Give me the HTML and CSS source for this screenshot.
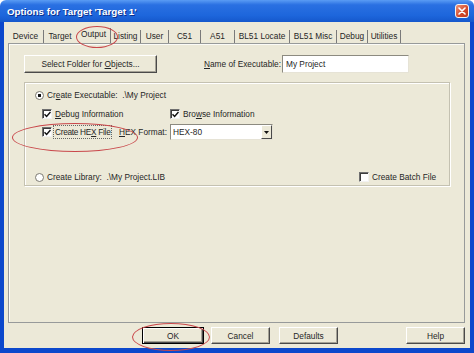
FILE: index.html
```html
<!DOCTYPE html>
<html lang="en">
<head>
  <meta charset="UTF-8">
  <title>Options for Target 'Target 1'</title>
  <link rel="stylesheet" href="styles.css">
</head>
<body>
  <div class="window">
    <div class="titlebar">
      <span class="title">Options for Target 'Target 1'</span>
      <span class="close">
        <svg width="8" height="8" viewBox="0 0 8 8"><path d="M1 1L7 7M7 1L1 7" stroke="#fff" stroke-width="1.6" stroke-linecap="round"/></svg>
      </span>
    </div>

    <div class="frame">
      <div class="tabs">
        <span class="tab t-device">Device</span>
        <span class="tab t-target">Target</span>
        <span class="tab t-output active">Output</span>
        <span class="tab t-listing">Listing</span>
        <span class="tab t-user">User</span>
        <span class="tab t-c51">C51</span>
        <span class="tab t-a51">A51</span>
        <span class="tab t-locate">BL51 Locate</span>
        <span class="tab t-misc">BL51 Misc</span>
        <span class="tab t-debug">Debug</span>
        <span class="tab t-util">Utilities</span>
      </div>

      <div class="panel">
        <div class="top-row">
          <button class="btn folder-btn">Select Folder for <u>O</u>bjects...</button>
          <span class="name-label"><u>N</u>ame of Executable:</span>
          <div class="field">My Project</div>
        </div>

        <div class="group">
          <div class="opt">
            <span class="radio on"></span><span>Cr<u>e</u>ate Executable:&nbsp; .\My Project</span>
          </div>
          <div class="opt row-b">
            <span class="item w-debug"><span class="check"><svg width="7" height="7" viewBox="0 0 7 7"><path d="M0.5 3.2L2.6 5.4L6.5 1" stroke="#111" stroke-width="1.5" fill="none"/></svg></span><span><u>D</u>ebug Information</span></span>
            <span class="item"><span class="check"><svg width="7" height="7" viewBox="0 0 7 7"><path d="M0.5 3.2L2.6 5.4L6.5 1" stroke="#111" stroke-width="1.5" fill="none"/></svg></span><span>Bro<u>w</u>se Information</span></span>
          </div>
          <div class="opt row-c">
            <span class="item w-hex"><span class="check"><svg width="7" height="7" viewBox="0 0 7 7"><path d="M0.5 3.2L2.6 5.4L6.5 1" stroke="#111" stroke-width="1.5" fill="none"/></svg></span><span class="focus">Create HE<u>X</u> File</span></span>
            <span class="hex-label"><u>H</u>EX Format:</span>
            <div class="combo">
              <span class="combo-text">HEX-80</span>
              <span class="combo-btn"><svg width="5" height="3" viewBox="0 0 5 3"><path d="M0 0H5L2.5 3Z" fill="#111"/></svg></span>
            </div>
          </div>
          <div class="opt row-d">
            <span class="item w-lib"><span class="radio"></span><span>Create Library:&nbsp; .\My Project.LIB</span></span>
            <span class="item"><span class="check"></span><span>Create Batch File</span></span>
          </div>
        </div>
      </div>

      <div class="actions">
        <button class="btn act default">OK</button>
        <button class="btn act cancel">Cancel</button>
        <button class="btn act defaults">Defaults</button>
        <button class="btn act help">Help</button>
      </div>
    </div>

    <span class="ring ring-tab"></span>
    <span class="ring ring-hex"></span>
    <span class="ring ring-ok"></span>
  </div>
</body>
</html>
```

FILE: styles.css
```css
body {
  margin: 0;
  background: #fff;
}
.window {
  position: relative;
  width: 474px;
  height: 353px;
  display: flex;
  flex-direction: column;
  font-family: "Liberation Sans", Arial, sans-serif;
  font-size: 8.3px;
  color: #262626;
}
u {
  text-decoration-thickness: 1px;
  text-underline-offset: 1px;
}

/* title bar */
.titlebar {
  height: 22px;
  flex: none;
  display: flex;
  align-items: center;
  justify-content: space-between;
  padding: 0 5px 0 7px;
  border-radius: 6px 6px 0 0;
  background: linear-gradient(#5a9cf4, #2a70e2 22%, #1d66dc 70%, #1558cc);
}
.title {
  color: #fff;
  font-weight: bold;
  font-size: 9.8px;
  text-shadow: 1px 1px #0b2f8c;
}
.close {
  width: 14px;
  height: 14px;
  box-sizing: border-box;
  border: 1px solid #f4f4f4;
  border-radius: 3px;
  background: linear-gradient(135deg, #ee9478, #d2482a 60%, #c13a1d);
  display: flex;
  align-items: center;
  justify-content: center;
}

/* window body */
.frame {
  flex: 1;
  min-height: 0;
  display: flex;
  flex-direction: column;
  background: #ece9d8;
  border: 4px solid #0c48cc;
  border-top: 0;
  border-bottom-width: 5px;
  padding: 5px 5px 0 4px;
}
.tabs {
  display: flex;
  height: 16px;
  flex: none;
}
.tab {
  box-sizing: border-box;
  margin-top: 3px;
  height: 13px;
  line-height: 13px;
  text-align: center;
  border-right: 1px solid #7a7a7a;
}
.tab.active {
  margin-top: 1px;
  height: 15px;
}
.t-device { width: 36px; }
.t-target { width: 33px; border-right-color: transparent; }
.t-output { width: 34px; }
.t-listing { width: 30px; }
.t-user { width: 28px; }
.t-c51 { width: 32px; }
.t-a51 { width: 34px; }
.t-locate { width: 55px; }
.t-misc { width: 47px; }
.t-debug { width: 31px; }
.t-util { width: 33px; }

.panel {
  height: 280px;
  flex: none;
  box-sizing: border-box;
  border: 1px solid #979a9a;
  box-shadow: inset 1px 1px #fbfbf7;
  padding: 11px 0 0 15px;
}
.top-row {
  display: flex;
  align-items: center;
  height: 18px;
}
.btn {
  font: inherit;
  color: inherit;
  box-sizing: border-box;
  padding: 0;
  background: #ece9d8;
  border: 1px solid;
  border-color: #fff #4a4a4a #4a4a4a #fff;
  box-shadow: inset -1px -1px #a5a296;
  text-align: center;
  white-space: nowrap;
}
.folder-btn {
  width: 133px;
  height: 18px;
}
.name-label {
  margin-left: 47px;
  width: 78px;
}
.field {
  width: 127px;
  height: 18px;
  box-sizing: border-box;
  background: #fff;
  border: 1px solid;
  border-color: #8c8a80 #e6e3d6 #e6e3d6 #8c8a80;
  padding-left: 3px;
  display: flex;
  align-items: center;
}

/* options group */
.group {
  margin-top: 9px;
  width: 426px;
  height: 104px;
  box-sizing: border-box;
  border: 1px solid #c4c1b1;
  box-shadow: inset 1px 1px #fff, 1px 1px #fff;
  padding: 4px 0 0 10px;
  display: flex;
  flex-direction: column;
}
.opt {
  display: flex;
  align-items: center;
  height: 16px;
}
.row-b { margin-top: 3px; }
.row-c { margin-top: 2px; }
.row-d { margin-top: auto; }
.row-b, .row-c { padding-left: 7px; }
.item {
  display: flex;
  align-items: center;
}
.w-debug { width: 128px; }
.w-hex { width: 77px; }
.w-lib { width: 324px; }
.radio {
  width: 9px;
  height: 9px;
  box-sizing: border-box;
  border-radius: 50%;
  border: 1px solid #7d7b72;
  background: #fff;
  margin-right: 3px;
}
.radio.on {
  background: radial-gradient(circle, #111 1.4px, #fff 2px);
}
.check {
  width: 10px;
  height: 10px;
  box-sizing: border-box;
  background: #fff;
  border: 1px solid;
  border-color: #6f6f6f #f2f2f2 #f2f2f2 #6f6f6f;
  box-shadow: inset 1px 1px #3c3c3c;
  margin-right: 3px;
  display: flex;
  align-items: center;
  justify-content: center;
}
.focus {
  margin-left: -2px;
  padding: 1px;
  border: 1px dotted #666;
  letter-spacing: -0.3px;
  white-space: nowrap;
}
.hex-label {
  width: 51px;
}
.combo {
  width: 103px;
  height: 16px;
  box-sizing: border-box;
  background: #fff;
  border: 1px solid;
  border-color: #8c8a80 #e6e3d6 #e6e3d6 #8c8a80;
  display: flex;
}
.combo-text {
  flex: 1;
  padding-left: 2px;
  display: flex;
  align-items: center;
}
.combo-btn {
  width: 11px;
  box-sizing: border-box;
  background: #ece9d8;
  border: 1px solid;
  border-color: #fff #4a4a4a #4a4a4a #fff;
  display: flex;
  align-items: center;
  justify-content: center;
}

/* dialog buttons */
.actions {
  display: flex;
  align-items: center;
  margin-top: 4px;
  height: 17px;
  flex: none;
}
.act {
  width: 59px;
  height: 17px;
}
.default {
  width: 62px;
  margin-left: 134px;
  border-color: #000;
  box-shadow: inset 1px 1px #fff, inset -1px -1px #4a4a4a, inset -2px -2px #a5a296;
}
.cancel { margin-left: 7px; }
.defaults { margin-left: 9px; }
.help { margin-left: auto; }

/* red annotation rings */
.ring {
  position: absolute;
  border: 1px solid #c9484b;
  border-radius: 50%;
  pointer-events: none;
}
.ring-tab {
  left: 76px;
  top: 26px;
  width: 40px;
  height: 20px;
}
.ring-hex {
  left: 12px;
  top: 123px;
  width: 124px;
  height: 27px;
}
.ring-ok {
  left: 132px;
  top: 323px;
  width: 76px;
  height: 26px;
}
```
